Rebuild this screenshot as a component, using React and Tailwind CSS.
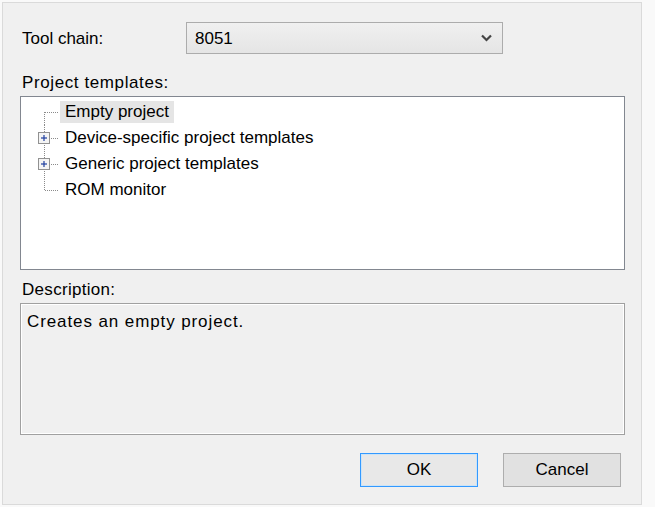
import React from "react";

const font = { fontFamily: '"Liberation Sans", Arial, sans-serif' };

const items = [
  { label: "Empty project", first: true, selected: true },
  { label: "Device-specific project templates", expandable: true },
  { label: "Generic project templates", expandable: true },
  { label: "ROM monitor", last: true },
];

function Connector({ first, last, expandable }) {
  // gutter 40 wide, row 26 tall; vertical line at x=23, horizontal to x=37
  return (
    <svg width="39" height="26" className="shrink-0">
      <line
        x1="23.5"
        y1={first ? 13 : 0}
        x2="23.5"
        y2={last ? 13 : 26}
        stroke="#8a8a8a"
        strokeDasharray="1 1"
      />
      <line x1="24" y1="13.5" x2="38" y2="13.5" stroke="#8a8a8a" strokeDasharray="1 1" />
      {expandable && (
        <g>
          <rect x="17.5" y="7.5" width="11" height="11" fill="#f4f4f4" stroke="#919191" />
          <line x1="20" y1="13" x2="26" y2="13" stroke="#1f3f9f" strokeWidth="1.2" />
          <line x1="23" y1="10" x2="23" y2="16" stroke="#1f3f9f" strokeWidth="1.2" />
        </g>
      )}
    </svg>
  );
}

export default function App() {
  return (
    <div className="w-[655px] h-[507px] bg-[#f9f9f9] pt-[2px] pl-[2px]" style={font}>
      <div className="w-[640px] h-[503px] border border-[#dadada] bg-[#f0f0f0] text-[17px] text-black flex flex-col pl-[17px]">
        {/* Tool chain */}
        <div className="flex items-center mt-[19px] h-[32px]">
          <span className="w-[166px] pl-[2px] pt-[2px]">Tool chain:</span>
          <div className="w-[317px] h-[32px] border border-[#acacac] bg-gradient-to-b from-[#f0f0f0] to-[#e5e5e5] flex items-center justify-between pl-[8px] pr-[10px]">
            <span className="pt-[1px]">8051</span>
            <svg width="11" height="8" viewBox="0 0 11 8">
              <path d="M1 1.5 L5.5 6 L10 1.5" fill="none" stroke="#444" strokeWidth="2.2" />
            </svg>
          </div>
        </div>

        <div className="mt-[16px] h-[26px] leading-[26px] pl-[2px] tracking-[0.6px]">Project templates:</div>

        {/* Tree */}
        <div className="w-[605px] h-[174px] border border-[#828790] bg-white pt-[2px]">
          {items.map((it) => (
            <div key={it.label} className="flex items-center h-[26px]">
              <Connector first={it.first} last={it.last} expandable={it.expandable} />
              <span
                className={`h-[22px] leading-[22px] px-[5px] ${
                  it.selected ? "bg-[#e5e5e5]" : ""
                }`}
              >
                {it.label}
              </span>
            </div>
          ))}
        </div>

        <div className="mt-[7px] h-[26px] leading-[26px] pl-[2px] tracking-[0.3px]">Description:</div>

        {/* Description */}
        <div className="w-[605px] h-[132px] border border-[#a0a0a0] bg-[#f0f0f0] shadow-[inset_1px_1px_0_#ffffff,inset_-1px_-1px_0_#ffffff] px-[6px] pt-[5px] tracking-[0.9px]">
          Creates an empty project.
        </div>

        {/* Buttons */}
        <div className="flex justify-end gap-[25px] mt-[18px] w-[601px]">
          <button className="w-[118px] h-[34px] border border-[#3399ff] bg-[#e8e8e8] shadow-[inset_0_0_0_1px_#cce4f7]">
            OK
          </button>
          <button className="w-[118px] h-[34px] border border-[#adadad] bg-[#e1e1e1]">
            Cancel
          </button>
        </div>
      </div>
    </div>
  );
}
